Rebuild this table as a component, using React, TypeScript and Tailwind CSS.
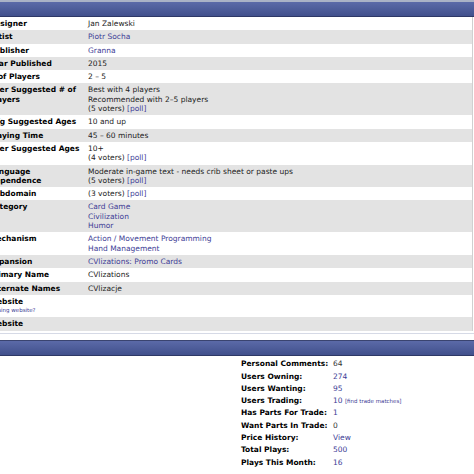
import React from "react";

type Row = { label: string; lines: React.ReactNode[]; sub?: string };

const Link = ({ children }: { children: React.ReactNode }) => (
  <span className="text-[#3d3d96]">{children}</span>
);

const Poll = ({ n }: { n: number }) => (
  <span>
    ({n} voters) <Link>[poll]</Link>
  </span>
);

const rows: Row[] = [
  { label: "Designer", lines: ["Jan Zalewski"] },
  { label: "Artist", lines: [<Link>Piotr Socha</Link>] },
  { label: "Publisher", lines: [<Link>Granna</Link>] },
  { label: "Year Published", lines: ["2015"] },
  { label: "# of Players", lines: ["2 – 5"] },
  {
    label: "User Suggested # of Players",
    lines: ["Best with 4 players", "Recommended with 2–5 players", <Poll n={5} />],
  },
  { label: "Mfg Suggested Ages", lines: ["10 and up"] },
  { label: "Playing Time", lines: ["45 – 60 minutes"] },
  { label: "User Suggested Ages", lines: ["10+", <Poll n={4} />] },
  {
    label: "Language Dependence",
    lines: ["Moderate in-game text - needs crib sheet or paste ups", <Poll n={5} />],
  },
  { label: "Subdomain", lines: [<Poll n={3} />] },
  {
    label: "Category",
    lines: [<Link>Card Game</Link>, <Link>Civilization</Link>, <Link>Humor</Link>],
  },
  {
    label: "Mechanism",
    lines: [<Link>Action / Movement Programming</Link>, <Link>Hand Management</Link>],
  },
  { label: "Expansion", lines: [<Link>CVlizations: Promo Cards</Link>] },
  { label: "Primary Name", lines: ["CVlizations"] },
  { label: "Alternate Names", lines: ["CVlizacje"] },
  { label: "Website", lines: [], sub: "Missing website?" },
  { label: "Website", lines: [] },
];

const stats: [string, React.ReactNode][] = [
  ["Personal Comments:", <span className="text-[#333]">64</span>],
  ["Users Owning:", <Link>274</Link>],
  ["Users Wanting:", <Link>95</Link>],
  [
    "Users Trading:",
    <span>
      <Link>10</Link> <span className="text-[5.5px] text-[#3d3d96]">[find trade matches]</span>
    </span>,
  ],
  ["Has Parts For Trade:", <Link>1</Link>],
  ["Want Parts In Trade:", <span className="text-[#333]">0</span>],
  ["Price History:", <Link>View</Link>],
  ["Total Plays:", <Link>500</Link>],
  ["Plays This Month:", <Link>16</Link>],
];

const Bar = () => (
  <div className="h-[15px] bg-gradient-to-b from-[#5b6aa8] to-[#41508c] border-b border-[#2e3866]" />
);

export default function App() {
  return (
    <div
      className="w-[474px] h-[474px] overflow-hidden bg-white text-[7.5px] text-[#222]"
      style={{ fontFamily: '"DejaVu Sans", Verdana, sans-serif' }}
    >
      <div className="h-[2px] bg-[#aab2c6]" />
      <Bar />
      <div className="-ml-[13px] w-[486px] border-r border-[#d0d0d0]">
        {rows.map((r, i) => (
          <div
            key={i}
            className={`flex py-[2px] leading-[9.3px] ${i % 2 ? "bg-[#e3e3e3]" : "bg-white"}`}
          >
            <div className="w-[101px] shrink-0 pl-[2px] pr-[6px] font-bold text-black">
              <div>{r.label}</div>
              {r.sub && <div className="font-normal text-[5.5px] text-[#3d3d96]">{r.sub}</div>}
            </div>
            <div className="flex-1">
              {r.lines.length === 0 && <div>&nbsp;</div>}
              {r.lines.map((l, j) => (
                <div key={j}>{l}</div>
              ))}
            </div>
          </div>
        ))}
      </div>
      <div className="h-[2px]" />
      <div className="h-px bg-[#d6dae6]" />
      <div className="h-[6px]" />
      <div className="h-px bg-[#3a4470]" />
      <Bar />
      <div className="pl-[241px] pt-[2px]">
        {stats.map(([k, v], i) => (
          <div key={i} className="flex h-[12.3px] items-center">
            <div className="w-[92px] font-bold text-black">{k}</div>
            <div>{v}</div>
          </div>
        ))}
      </div>
    </div>
  );
}
